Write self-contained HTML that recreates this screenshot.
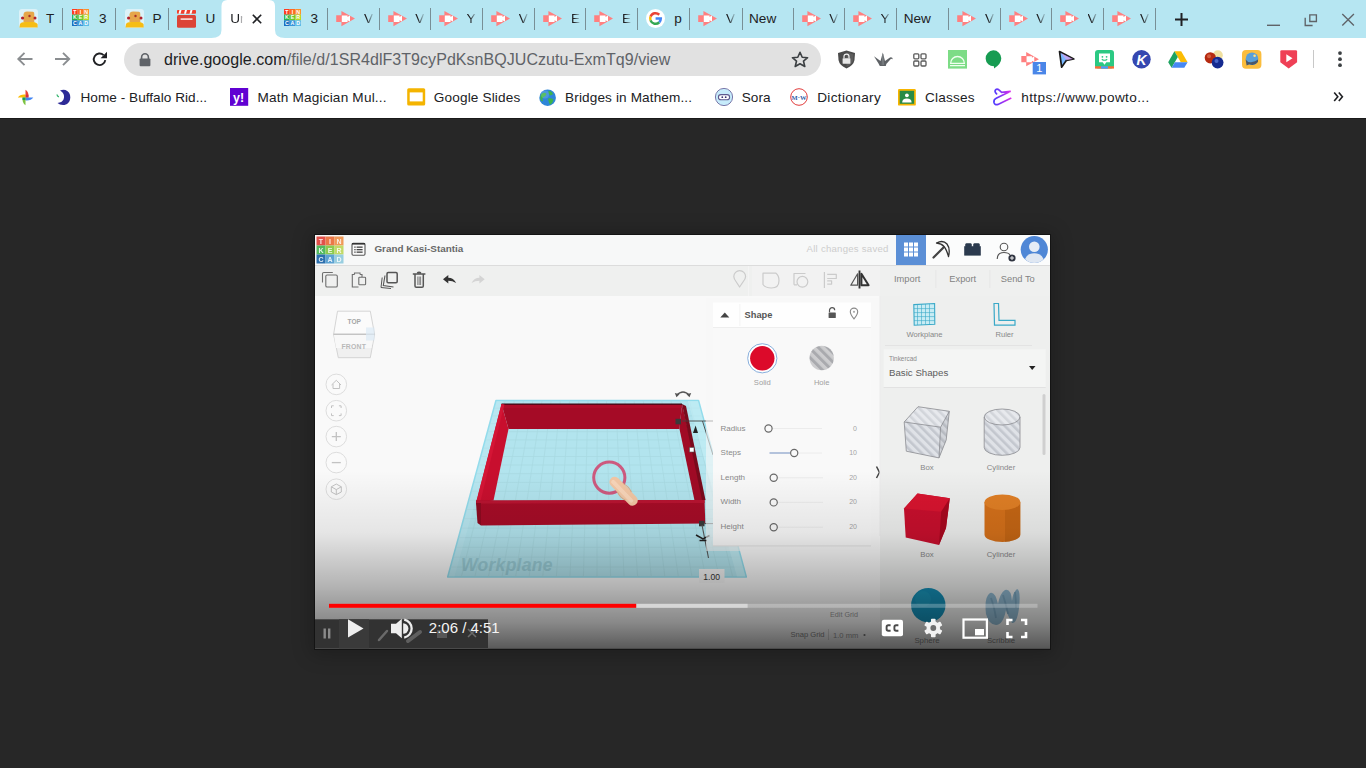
<!DOCTYPE html>
<html><head><meta charset="utf-8">
<style>
*{margin:0;padding:0;box-sizing:border-box}
html,body{width:1366px;height:768px;overflow:hidden;background:#272727;font-family:"Liberation Sans",sans-serif}
svg{position:absolute;overflow:visible}
#tabs{position:absolute;left:0;top:0;width:1366px;height:38px;background:#b6e6f2}
#toolbar{position:absolute;left:0;top:38px;width:1366px;height:42px;background:#fff}
#bookmarks{position:absolute;left:0;top:80px;width:1366px;height:38px;background:#fff;border-bottom:1px solid #1a1a1a;box-sizing:content-box}
.sep{position:absolute;top:8px;width:1px;height:22px;background:#788f96}
.tl{position:absolute;top:10.6px;font-size:13.6px;color:#202124;line-height:16px;white-space:nowrap}
.bm{position:absolute;top:89.6px;font-size:13.6px;color:#202124;line-height:16px;white-space:nowrap}
#omni{position:absolute;left:124px;top:43px;width:697px;height:33px;border-radius:17px;background:#e1e1e1}
#url{position:absolute;left:164px;top:50px;font-size:16px;letter-spacing:0.05px;line-height:19px;color:#5f6368;white-space:nowrap}
#url b{font-weight:400;color:#202124}
#video{position:absolute;left:315px;top:235px;width:735px;height:414px;overflow:hidden;background:#f8f8f8;box-shadow:0 0 0 1px #141414,0 2px 18px 4px rgba(0,0,0,.22)}
.fade{-webkit-mask-image:linear-gradient(90deg,#000 3px,rgba(0,0,0,.25) 8px,transparent 10px)}
</style></head><body>
<div id="tabs"></div>
<svg style="left:0;top:0" width="1366" height="38"><path d="M211.5 38 Q221.5 38 221.5 30 L221.5 6 Q221.5 0 227.5 0 L269 0 Q275 0 275 6 L275 30 Q275 38 285 38 Z" fill="#fff"/></svg>
<div class="sep" style="left:61.9px"></div>
<div class="sep" style="left:114.9px"></div>
<div class="sep" style="left:168.1px"></div>
<div class="sep" style="left:327.4px"></div>
<div class="sep" style="left:378.5px"></div>
<div class="sep" style="left:429.9px"></div>
<div class="sep" style="left:482.1px"></div>
<div class="sep" style="left:534.2px"></div>
<div class="sep" style="left:585.3px"></div>
<div class="sep" style="left:636.9px"></div>
<div class="sep" style="left:689.2px"></div>
<div class="sep" style="left:741.5px"></div>
<div class="sep" style="left:792.5px"></div>
<div class="sep" style="left:843.8px"></div>
<div class="sep" style="left:896.2px"></div>
<div class="sep" style="left:948.4px"></div>
<div class="sep" style="left:999.5px"></div>
<div class="sep" style="left:1050.8px"></div>
<div class="sep" style="left:1103.2px"></div>
<div class="sep" style="left:1155.4px"></div>
<svg width="0" height="0" style="left:0;top:0">
<defs>
<symbol id="i-bit" viewBox="0 0 19 19">
 <rect x="0" y="0" width="19" height="19" rx="3" fill="#dcf2f8"/>
 <path d="M4.5 5 Q5 2.6 8 2.6 L14 2.8 Q15.5 3 15.3 5 L15.3 13 L4.5 13 Z" fill="#e6a64a"/>
 <circle cx="3.6" cy="9" r="1.6" fill="#b2202a"/><circle cx="16" cy="9" r="1.5" fill="#b2202a"/>
 <circle cx="10.5" cy="7" r="1.2" fill="#a8302a"/>
 <path d="M0.5 18.5 L1 15 Q2 13 6 13 L14 13 Q18 13.5 18.6 15.5 L18.6 18.6 Z" fill="#f6bd14"/>
</symbol>
<symbol id="i-tc" viewBox="0 0 18 18">
 <rect x="0" y="0" width="6" height="6" fill="#ff3b1f"/><rect x="6" y="0" width="6" height="6" fill="#ff6a21"/><rect x="12" y="0" width="6" height="6" fill="#ff8f2a"/>
 <rect x="0" y="6" width="6" height="6" fill="#27b34a"/><rect x="6" y="6" width="6" height="6" fill="#6cc82c"/><rect x="12" y="6" width="6" height="6" fill="#b8d826"/>
 <rect x="0" y="12" width="6" height="6" fill="#1a6fc0"/><rect x="6" y="12" width="6" height="6" fill="#3a97dc"/><rect x="12" y="12" width="6" height="6" fill="#5cbde8"/>
 <g font-family="Liberation Sans" font-weight="700" font-size="5.6" fill="#fff" text-anchor="middle"><text x="3" y="5">T</text><text x="9" y="5">I</text><text x="15" y="5">N</text><text x="3" y="11">K</text><text x="9" y="11">E</text><text x="15" y="11">R</text><text x="3" y="17">C</text><text x="9" y="17">A</text><text x="15" y="17">D</text></g>
</symbol>
<symbol id="i-vid" viewBox="0 0 20 16">
 <path d="M0.2 4.3 L5.4 4.3 L5.4 0 L19 7.6 L5.4 15.3 L5.4 11 L0.2 11 Z" fill="#ff8080"/>
 <path d="M5.8 4.4 L11.5 4.4 L11.5 6 L14 4.6 L14 10.6 L11.5 9.3 L11.5 11 L5.8 11 Z" fill="#fff"/>
</symbol>
<symbol id="i-clap" viewBox="0 0 19 18">
 <rect x="0" y="0" width="19" height="3.7" rx="0.8" fill="#f0402e"/>
 <path d="M2.5 0 L4.5 0 L3.5 3.7 L1.5 3.7 Z M8 0 L10 0 L9 3.7 L7 3.7 Z M13.5 0 L15.5 0 L14.5 3.7 L12.5 3.7 Z" fill="#fff"/>
 <rect x="0" y="5" width="19" height="12.8" rx="1.5" fill="#dc4437"/>
 <rect x="3.6" y="8.3" width="11.9" height="1.6" fill="#fbe0dc"/>
</symbol>
<symbol id="i-g" viewBox="0 0 19 19">
 <circle cx="9.5" cy="9.5" r="9.5" fill="#fff"/>
 <g fill="none" stroke-width="2.5">
 <path d="M13.25 5.75 A5.3 5.3 0 0 0 4.52 7.69" stroke="#ea4335"/>
 <path d="M4.52 7.69 A5.3 5.3 0 0 0 4.52 11.31" stroke="#fbbc05"/>
 <path d="M4.52 11.31 A5.3 5.3 0 0 0 13.25 13.25" stroke="#34a853"/>
 <path d="M13.25 13.25 A5.3 5.3 0 0 0 14.8 9.5 H9.6" stroke="#4285f4"/>
 </g>
</symbol>
</defs></svg>
<svg style="left:18.5px;top:9px" width="19" height="19"><use href="#i-bit"/></svg>
<div class="tl" style="left:46px">T</div>
<svg style="left:72.2px;top:9px" width="17" height="17"><use href="#i-tc"/></svg>
<div class="tl" style="left:99.0px">3</div>
<svg style="left:124.9px;top:9px" width="19" height="19"><use href="#i-bit"/></svg>
<div class="tl" style="left:152.4px">P</div>
<svg style="left:177.0px;top:10px" width="19" height="18"><use href="#i-clap"/></svg>
<div class="tl" style="left:205.39999999999998px">U</div>
<div class="tl" style="left:230.3px;-webkit-mask-image:linear-gradient(90deg,#000 9px,transparent 13px)">Ur</div>
<svg style="left:251.8px;top:13.8px" width="10" height="10"><path d="M0.8 0.8 L9.2 9.2 M9.2 0.8 L0.8 9.2" stroke="#202124" stroke-width="1.6"/></svg>
<svg style="left:283.8px;top:9px" width="17" height="17"><use href="#i-tc"/></svg>
<div class="tl" style="left:310.6px">3</div>
<svg style="left:336.4px;top:10.6px" width="20" height="16"><use href="#i-vid"/></svg>
<div class="tl fade" style="left:364.09999999999997px">V</div>
<svg style="left:387.5px;top:10.6px" width="20" height="16"><use href="#i-vid"/></svg>
<div class="tl fade" style="left:415.2px">V</div>
<svg style="left:438.9px;top:10.6px" width="20" height="16"><use href="#i-vid"/></svg>
<div class="tl fade" style="left:466.59999999999997px">Y</div>
<svg style="left:491.1px;top:10.6px" width="20" height="16"><use href="#i-vid"/></svg>
<div class="tl fade" style="left:518.8000000000001px">V</div>
<svg style="left:543.2px;top:10.6px" width="20" height="16"><use href="#i-vid"/></svg>
<div class="tl fade" style="left:570.9000000000001px">E</div>
<svg style="left:594.3px;top:10.6px" width="20" height="16"><use href="#i-vid"/></svg>
<div class="tl fade" style="left:622.0px">E</div>
<svg style="left:646.0px;top:8.9px" width="19" height="19"><use href="#i-g"/></svg>
<div class="tl" style="left:674.1999999999999px">p</div>
<svg style="left:698.2px;top:10.6px" width="20" height="16"><use href="#i-vid"/></svg>
<div class="tl fade" style="left:725.9000000000001px">V</div>
<div class="tl" style="left:749px">New</div>
<svg style="left:801.5px;top:10.6px" width="20" height="16"><use href="#i-vid"/></svg>
<div class="tl fade" style="left:829.2px">V</div>
<svg style="left:852.8px;top:10.6px" width="20" height="16"><use href="#i-vid"/></svg>
<div class="tl fade" style="left:880.5px">Y</div>
<div class="tl" style="left:903.7px">New</div>
<svg style="left:957.4px;top:10.6px" width="20" height="16"><use href="#i-vid"/></svg>
<div class="tl fade" style="left:985.1px">V</div>
<svg style="left:1008.5px;top:10.6px" width="20" height="16"><use href="#i-vid"/></svg>
<div class="tl fade" style="left:1036.2px">V</div>
<svg style="left:1059.8px;top:10.6px" width="20" height="16"><use href="#i-vid"/></svg>
<div class="tl fade" style="left:1087.5px">V</div>
<svg style="left:1112.2px;top:10.6px" width="20" height="16"><use href="#i-vid"/></svg>
<div class="tl fade" style="left:1139.9px">V</div>
<svg style="left:1175px;top:12.5px" width="13" height="13"><path d="M6.5 0 V13 M0 6.5 H13" stroke="#202124" stroke-width="2"/></svg>
<svg style="left:1266px;top:24px" width="16" height="3"><rect x="1" y="0.6" width="13" height="1.4" fill="#5f6368"/></svg>
<svg style="left:1303px;top:12.5px" width="16" height="15"><path d="M6.8 1.9 H13.4 V8.5 H6.8 Z M2.2 4.8 V12.5 H9.6" fill="none" stroke="#5f6368" stroke-width="1.35"/></svg>
<svg style="left:1341px;top:13px" width="14" height="14"><path d="M1.3 1 L12.9 12.6 M12.9 1 L1.3 12.6" stroke="#5f6368" stroke-width="1.35"/></svg><div id="toolbar"></div>
<svg style="left:16px;top:51px" width="18" height="16"><path d="M16.5 8 H2.5 M8.5 1.8 L2.3 8 L8.5 14.2" fill="none" stroke="#8a8d90" stroke-width="1.9"/></svg>
<svg style="left:53.5px;top:51px" width="18" height="16"><path d="M1 8 H15 M9 1.8 L15.2 8 L9 14.2" fill="none" stroke="#8a8d90" stroke-width="1.9"/></svg>
<svg style="left:91px;top:51px" width="17" height="17"><path d="M14.3 9.2 A5.8 5.8 0 1 1 12.6 4.1" fill="none" stroke="#202124" stroke-width="1.9"/><path d="M16 0.8 L16 7.3 L9.6 7.3 Z" fill="#202124"/></svg>
<div id="omni"></div>
<svg style="left:138.5px;top:52.5px" width="12" height="14"><path d="M2.6 6 V4.2 A3.4 3.4 0 0 1 9.4 4.2 V6" fill="none" stroke="#5f6368" stroke-width="1.6"/><rect x="0.6" y="5.6" width="10.8" height="7.6" rx="1" fill="#5f6368"/></svg>
<div id="url"><b>drive.google.com</b>/file/d/1SR4dlF3T9cyPdKsnBQJUCzutu-ExmTq9/view</div>
<svg style="left:791px;top:51px" width="18" height="17"><path d="M9 1.3 L11.2 6.3 L16.6 6.7 L12.5 10.2 L13.8 15.5 L9 12.7 L4.2 15.5 L5.5 10.2 L1.4 6.7 L6.8 6.3 Z" fill="none" stroke="#3c4043" stroke-width="1.6" stroke-linejoin="round"/></svg>
<!-- extensions -->
<svg style="left:837px;top:50px" width="19" height="19"><path d="M9.5 0.5 L18 3 L17.5 10 Q16.5 15.5 9.5 18.5 Q2.5 15.5 1.5 10 L1 3 Z" fill="#4a4a4a"/><path d="M9.5 2.2 L16.5 4.3 L16.2 9.8 Q15.3 14.3 9.5 16.8 Z" fill="#6a6a6a" opacity="0.6"/><path d="M7 8.3 V6.6 A2.5 2.5 0 0 1 12 6.6 V8.3" fill="none" stroke="#eee" stroke-width="1.2"/><rect x="5.6" y="8.2" width="7.8" height="5.6" rx="0.6" fill="#e8e8e8"/></svg>
<svg style="left:872px;top:50px" width="22" height="18"><path d="M2 6.2 L8.5 11 L10.8 2.5 L13 11 L18 7.5 Q20.5 6.8 20.8 9.3 L19 8.8 L14.3 14 L13.8 16 H7.8 L6.5 13.5 Z" fill="#5e6266"/><path d="M10.8 4 L10.2 15 M10.8 4 L11.6 15" stroke="#8a8e92" stroke-width="0.6"/></svg>
<svg style="left:913px;top:53px" width="14" height="14"><g fill="none" stroke="#5a5a5a" stroke-width="1.3"><rect x="0.8" y="0.8" width="5" height="5" rx="1"/><rect x="8" y="0.8" width="5" height="5" rx="1"/><rect x="0.8" y="8" width="5" height="5" rx="1"/><rect x="8" y="8" width="5" height="5" rx="1"/></g></svg>
<svg style="left:948px;top:50px" width="19" height="19"><rect x="0" y="0" width="19" height="18.6" fill="#7ddc86"/><path d="M2.6 13.4 A6.9 6.9 0 0 1 16.4 13.4 Z M2 15.6 H17" fill="none" stroke="#f0fff0" stroke-width="1.3"/></svg>
<svg style="left:985px;top:50px" width="17" height="19"><path d="M8.3 0.3 A8 8 0 0 1 16.3 8.3 Q16.3 14 9 18.6 L9 16.3 A8 8 0 0 1 8.3 0.3 Z" fill="#179c52"/></svg>
<svg style="left:1021px;top:52px" width="26" height="23"><use href="#i-vid" x="0" y="0" width="19" height="15"/><rect x="11.7" y="10" width="13.3" height="12.4" fill="#4a86e8"/><text x="18.3" y="20.4" font-family="Liberation Sans" font-size="11" fill="#fff" text-anchor="middle">1</text></svg>
<svg style="left:1058px;top:50px" width="17" height="19"><path d="M1.5 1.5 L15.8 9 L8.5 10.3 L3.6 17.2 Z" fill="#7ab8ff" stroke="#1a1a1a" stroke-width="1.7" stroke-linejoin="round"/><path d="M3 3 L8.5 10.3 L15 9" fill="#d8a0f0" opacity="0.7"/></svg>
<svg style="left:1095px;top:50px" width="19" height="19"><rect x="0" y="0" width="19" height="18.6" rx="3" fill="#2bc983"/><rect x="0" y="16.3" width="19" height="2.3" fill="#ff6b35"/><rect x="6" y="16.3" width="7" height="2.3" fill="#3fa0ff"/><path d="M4 3.4 H15 V12.3 H11.3 L9.5 14.8 L7.7 12.3 H4 Z" fill="#fff"/><circle cx="7.4" cy="6.8" r="0.9" fill="#2bc983"/><circle cx="11.6" cy="6.8" r="0.9" fill="#2bc983"/><path d="M6.8 9.2 Q9.5 11.3 12.2 9.2" fill="none" stroke="#2bc983" stroke-width="1.1"/></svg>
<svg style="left:1132px;top:50px" width="19" height="19"><circle cx="9.5" cy="9.3" r="9.2" fill="#3547b0"/><text x="9.6" y="14.8" font-family="Liberation Sans" font-weight="700" font-style="italic" font-size="14" fill="#fff" text-anchor="middle">K</text></svg>
<svg style="left:1167.5px;top:51px" width="20" height="17"><path d="M6.4 0.3 H13.2 L19.6 11.2 H12.8 Z" fill="#fbbc04"/><path d="M6.4 0.3 L0.2 11.2 L3.6 16.8 L9.8 5.9 Z" fill="#1ea362"/><path d="M3.6 16.8 H16.3 L19.6 11.2 H6.9 Z" fill="#4688f4"/></svg>
<svg style="left:1204px;top:50px" width="21" height="19"><circle cx="13.8" cy="5.3" r="5" fill="#f0e0a0"/><circle cx="6.3" cy="7.8" r="5.6" fill="#b52a10"/><circle cx="5" cy="6.2" r="2" fill="#e88060" opacity="0.6"/><circle cx="13.6" cy="12.6" r="5.9" fill="#152a90"/><circle cx="12.5" cy="11" r="2" fill="#6080e0" opacity="0.7"/></svg>
<svg style="left:1242px;top:50px" width="20" height="19"><rect x="0" y="0" width="19.4" height="18.8" rx="4" fill="#fbbd3e"/><circle cx="10" cy="8.8" r="6.3" fill="#5a9fd8"/><path d="M3.6 9.5 Q6 13 10 12 Q13 11.5 16 9.5 L16 12 Q12 16.5 7.5 14.2 L4.6 15.6 Z" fill="#49576a"/><circle cx="12.6" cy="5.7" r="1.3" fill="#ffe080"/></svg>
<svg style="left:1280px;top:50px" width="18" height="19"><path d="M0.3 1.5 Q0.3 0.2 1.6 0.2 H15.8 Q17.1 0.2 17.1 1.5 V12.3 L8.7 18.6 L0.3 12.3 Z" fill="#ef4056"/><path d="M6.3 4.3 L12.5 8.3 L6.3 12.3 Z" fill="#fff"/></svg>
<div style="position:absolute;left:1313px;top:50px;width:1px;height:18px;background:#c8c8c8"></div>
<svg style="left:1337px;top:51px" width="6" height="17"><circle cx="3" cy="2.1" r="1.9" fill="#3c4043"/><circle cx="3" cy="8.2" r="1.9" fill="#3c4043"/><circle cx="3" cy="14.2" r="1.9" fill="#3c4043"/></svg>
<div id="bookmarks"></div>
<svg style="left:17px;top:89px" width="17" height="17"><path d="M8.5 8.5 V0.8 Q12 3 11.5 8.5 Z" fill="#e94235"/><path d="M8.5 8.5 H16.3 Q14 12 8.5 11.5 Z" fill="#4285f4"/><path d="M8.5 8.5 V16.3 Q5 14 5.5 8.5 Z" fill="#7cc242"/><path d="M8.5 8.5 H0.8 Q3 5 8.5 5.5 Z" fill="#fbbc04"/><path d="M8.5 8.5 L5.5 8.5 L5.6 11 L8.5 11 Z" fill="#1a9960"/><path d="M8.5 8.5 L11.5 8.5 L11.5 5.8 L8.5 5.8Z" fill="#c0244f" opacity="0.7"/></svg>
<svg style="left:55.5px;top:89px" width="15" height="17"><path d="M4 1.5 Q7 0.2 9.5 1 Q14.3 2.8 14.3 8.5 Q14.3 14.5 8.5 16 Q4 16.5 1.5 14 Q6 13.5 7.5 10.5 Q9 6.5 6.5 3.5 Q5.5 2.5 4 1.5 Z" fill="#2d2a96"/><path d="M1 5.5 Q1.2 7.5 3 7.8" fill="none" stroke="#3cb873" stroke-width="1.4"/></svg>
<div class="bm" style="left:80.5px;letter-spacing:0.03px">Home - Buffalo Rid...</div>
<svg style="left:229.8px;top:87.8px" width="19" height="18"><rect x="0" y="0" width="18.2" height="17.8" fill="#6001d2"/><text x="8.6" y="14" font-family="Liberation Sans" font-weight="700" font-size="12.5" fill="#fff" text-anchor="middle">y!</text></svg>
<div class="bm" style="left:257.4px;letter-spacing:0.2px">Math Magician Mul...</div>
<svg style="left:406.6px;top:88px" width="19" height="18"><rect x="0.2" y="0.2" width="18" height="17.4" rx="1.5" fill="#f4b400"/><rect x="2.7" y="4.4" width="13" height="9" fill="#fff"/></svg>
<div class="bm" style="left:433.8px;letter-spacing:0.15px">Google Slides</div>
<svg style="left:538.5px;top:88.5px" width="18" height="18"><circle cx="8.6" cy="8.7" r="8.3" fill="#2e86d8"/><path d="M3 4.5 Q6 3 7.5 5 Q6.5 8 4 8.5 Q2.5 10 4 12 Q3 13 1.6 11 Q0.6 7 3 4.5 Z M9.5 1.5 Q13 2 14 5 Q12 7 10.5 6 Q9 4 9.5 1.5 Z M9 9.5 Q12 8.5 14.5 10.5 Q14 14 11 15.8 Q9.5 13 9 9.5 Z" fill="#3db44a"/><circle cx="6" cy="5.5" r="4" fill="#fff" opacity="0.15"/></svg>
<div class="bm" style="left:565.1px;letter-spacing:0.12px">Bridges in Mathem...</div>
<svg style="left:715px;top:88px" width="18" height="18"><circle cx="9" cy="9" r="8.6" fill="#c7ecfb" stroke="#6c6aa0" stroke-width="0.9"/><rect x="3.4" y="6.6" width="11.2" height="5.2" rx="2.6" fill="#fff" stroke="#5e5a8e" stroke-width="1.1"/><circle cx="7.3" cy="9.2" r="0.9" fill="#3a3570"/><circle cx="10.7" cy="9.2" r="0.9" fill="#3a3570"/></svg>
<div class="bm" style="left:741.8px">Sora</div>
<svg style="left:790px;top:88px" width="18" height="18"><circle cx="9" cy="9" r="8.3" fill="#fff" stroke="#e23c3c" stroke-width="1"/><text x="9" y="11.5" font-family="Liberation Serif" font-weight="700" font-size="6.5" fill="#3060a8" text-anchor="middle">M·W</text></svg>
<div class="bm" style="left:817.2px;letter-spacing:0.35px">Dictionary</div>
<svg style="left:898px;top:89px" width="18" height="17"><rect x="0" y="0" width="17.8" height="16.6" rx="1.2" fill="#f7b500"/><rect x="1.7" y="1.8" width="14.4" height="13" fill="#2a8b46"/><circle cx="8.9" cy="6.3" r="1.9" fill="#fff"/><path d="M4.2 13.5 Q4.2 9.6 8.9 9.6 Q13.6 9.6 13.6 13.5 Z" fill="#fff"/></svg>
<div class="bm" style="left:925.0px;letter-spacing:0.2px">Classes</div>
<svg style="left:993.3px;top:88px" width="20" height="19"><defs><linearGradient id="pwg" x1="0" x2="1"><stop offset="0" stop-color="#4b3bff"/><stop offset="1" stop-color="#d92ce8"/></linearGradient></defs><path d="M3.6 5.8 Q0.8 3 3 1.5 Q4.3 0.6 6.5 2.4 L8.6 4.4 L17.6 3.3 L3.2 10.2 Q0.5 11.5 1 14.5 Q1.8 17.5 5 16.4 L17.7 10.3" fill="none" stroke="url(#pwg)" stroke-width="1.7" stroke-linecap="round"/></svg>
<div class="bm" style="left:1021.2px;letter-spacing:0.38px">https://www.powto...</div>
<svg style="left:1333px;top:91px" width="11" height="12"><path d="M1.2 1.5 L4.8 5.8 L1.2 10.1 M5.8 1.5 L9.4 5.8 L5.8 10.1" fill="none" stroke="#202124" stroke-width="1.6"/></svg>
<div id="video"></div>
<svg style="left:315px;top:235px;overflow:hidden" width="735" height="414" viewBox="315 235 735 414">
<defs>
 <pattern id="hatch" width="6.5" height="6.5" patternUnits="userSpaceOnUse" patternTransform="rotate(-45)"><rect width="6.5" height="6.5" fill="#cdcdcf"/><rect width="3" height="6.5" fill="#a9aaae"/></pattern>
 <pattern id="hatchL" width="6" height="6" patternUnits="userSpaceOnUse" patternTransform="rotate(-45)"><rect width="6" height="6" fill="#dfe2e7"/><rect width="2.6" height="6" fill="#c3c7ce"/></pattern>
 <linearGradient id="ovl" x1="0" y1="0" x2="0" y2="1">
  <stop offset="0" stop-color="#000" stop-opacity="0"/>
  <stop offset="0.35" stop-color="#000" stop-opacity="0.08"/>
  <stop offset="0.65" stop-color="#000" stop-opacity="0.28"/>
  <stop offset="0.85" stop-color="#000" stop-opacity="0.45"/>
  <stop offset="1" stop-color="#000" stop-opacity="0.64"/>
 </linearGradient>
</defs>
<!-- base -->
<rect x="315" y="235" width="735" height="414" fill="#f9f9f9"/>
<!-- header -->
<rect x="315" y="235" width="735" height="30" fill="#f7f8f8"/>
<rect x="315" y="265" width="735" height="1" fill="#dcdcdc"/>
<!-- toolbar -->
<rect x="315" y="266" width="735" height="30" fill="#eff0ef"/>
<rect x="752" y="266" width="128" height="30" fill="#f2f2f2"/>
<!-- logo -->
<g>
 <rect x="316.5" y="236.5" width="9" height="9" fill="#e2504a"/><rect x="325.5" y="236.5" width="9" height="9" fill="#ec7848"/><rect x="334.5" y="236.5" width="9" height="9" fill="#f09a58"/>
 <rect x="316.5" y="245.5" width="9" height="9" fill="#52ba5e"/><rect x="325.5" y="245.5" width="9" height="9" fill="#8ccb50"/><rect x="334.5" y="245.5" width="9" height="9" fill="#c2da68"/>
 <rect x="316.5" y="254.5" width="9" height="9" fill="#2c70ae"/><rect x="325.5" y="254.5" width="9" height="9" fill="#5ca2d2"/><rect x="334.5" y="254.5" width="9" height="9" fill="#98cee0"/>
 <g font-family="Liberation Sans" font-weight="700" font-size="7" fill="#fff" text-anchor="middle" opacity="0.85">
  <text x="321" y="243.7">T</text><text x="330" y="243.7">I</text><text x="339" y="243.7">N</text>
  <text x="321" y="252.7">K</text><text x="330" y="252.7">E</text><text x="339" y="252.7">R</text>
  <text x="321" y="261.7">C</text><text x="330" y="261.7">A</text><text x="339" y="261.7">D</text>
 </g>
</g>
<!-- list icon -->
<rect x="352" y="243.3" width="13" height="12" rx="1.2" fill="#fafafa" stroke="#555" stroke-width="1.1"/>
<rect x="352" y="243" width="13" height="1.6" fill="#333"/>
<g fill="#444"><rect x="354.3" y="246.5" width="1.3" height="1.3"/><rect x="356.6" y="246.5" width="6" height="1.3"/><rect x="354.3" y="249" width="1.3" height="1.3"/><rect x="356.6" y="249" width="6" height="1.3"/><rect x="354.3" y="251.5" width="1.3" height="1.3"/><rect x="356.6" y="251.5" width="6" height="1.3"/></g>
<text x="374.4" y="251.8" font-family="Liberation Sans" font-weight="700" font-size="9.9" fill="#686868">Grand Kasi-Stantia</text>
<!-- header right -->
<text x="888.7" y="252.2" font-family="Liberation Sans" font-size="9.6" letter-spacing="0.25" fill="#cdcdcd" text-anchor="end">All changes saved</text>
<rect x="896" y="235" width="30" height="30" fill="#5b8fd6"/>
<g fill="#fff"><rect x="904" y="242.5" width="4" height="4"/><rect x="909" y="242.5" width="4" height="4"/><rect x="914" y="242.5" width="4" height="4"/><rect x="904" y="247.5" width="4" height="4"/><rect x="909" y="247.5" width="4" height="4"/><rect x="914" y="247.5" width="4" height="4"/><rect x="904" y="252.5" width="4" height="4"/><rect x="909" y="252.5" width="4" height="4"/><rect x="914" y="252.5" width="4" height="4"/></g>
<rect x="926" y="235" width="124" height="30" fill="#fbfcfc"/>
<path d="M933.5 257.5 L945 246" stroke="#444" stroke-width="2.2" stroke-linecap="round"/>
<path d="M936.5 243 Q943 239.5 947 244 Q950.5 248.5 948.5 256.5 Q946.5 249.5 944 246.5 Q941.5 243.5 936.5 243 Z" fill="#fafafa" stroke="#333" stroke-width="1.3" stroke-linejoin="round"/>
<path d="M964.5 246.5 H980.5 V255.3 H964.5 Z M965.5 246.5 V244.5 Q965.5 243.6 966.5 243.6 H970.5 Q971.5 243.6 971.5 244.5 V246.5 M973.5 246.5 V244.5 Q973.5 243.6 974.5 243.6 H978.5 Q979.5 243.6 979.5 244.5 V246.5" fill="#2b3a4e" stroke="#2b3a4e" stroke-width="0.6"/>
<circle cx="1004" cy="247" r="3.8" fill="none" stroke="#555" stroke-width="1.1"/>
<path d="M997.2 259 Q997.2 252.5 1004 252.5 Q1008.5 252.5 1010 255" fill="none" stroke="#555" stroke-width="1.1"/>
<circle cx="1012" cy="258" r="3.6" fill="#2f3440"/><path d="M1010 258 H1014 M1012 256 V260" stroke="#fff" stroke-width="0.9"/>
<circle cx="1034.3" cy="249.5" r="13.6" fill="#4f87d6"/>
<circle cx="1034.3" cy="246.8" r="5.3" fill="#e6edf6"/>
<path d="M1025 259 Q1027 253.3 1034.3 253.3 Q1041.5 253.3 1043.6 259 Q1040 263 1034.3 263 Q1028.5 263 1025 259 Z" fill="#dfe7f2"/>
<!-- toolbar left icons -->
<g fill="none" stroke="#6e6e6e" stroke-width="1.1">
 <path d="M322.5 282.5 V273.8 Q322.5 272.5 323.8 272.5 H332.8"/>
 <rect x="325.8" y="275" width="11.5" height="12" rx="1.3"/>
 <path d="M354.5 274.5 H352.3 V287 H358.5"/><path d="M354.5 274.5 V273 H360 V274.5 M360 274.5 H362 V277"/>
 <rect x="358.8" y="277.3" width="6.8" height="7.5" rx="0.8"/>
</g>
<g fill="none" stroke="#555" stroke-width="1.5">
 <rect x="387" y="272.6" width="10.2" height="10.2" rx="1.2"/>
 <path d="M385 275.5 L383.3 285.5 L393.5 287" stroke-width="1.1"/><path d="M382.2 277.5 L381 287.5 L391 288.5" stroke-width="1"/>
 <path d="M412.8 274 H425.4 M415 274.6 V286 Q415 287.3 416.3 287.3 H422 Q423.3 287.3 423.3 286 V274.6 M417.2 272.8 Q419 271.5 421 272.8"/>
</g>
<g stroke="#777" stroke-width="0.9"><path d="M417.8 276.5 V285 M419.2 276.5 V285 M420.6 276.5 V285"/></g>
<path d="M443 279.2 L448.3 275 L448.3 277.8 Q453.5 277.8 456.2 283 Q452.5 280.8 448.3 280.8 L448.3 283.5 Z" fill="#333"/>
<path d="M484.7 279.2 L479.4 275 L479.4 277.8 Q474.2 277.8 471.5 283 Q475.2 280.8 479.4 280.8 L479.4 283.5 Z" fill="#d4d4d4"/>
<!-- toolbar right icons -->
<rect x="748" y="266" width="0.8" height="30" fill="#f6f6f6"/>
<g fill="none" stroke="#cbcbcb" stroke-width="1.2" stroke-linejoin="round">
 <path d="M739.6 287 L736 281.5 Q733.8 278.5 733.8 276.5 A5.9 5.9 0 0 1 745.6 276.5 Q745.6 278.5 743.3 281.5 Z"/>
 <path d="M763 273.2 H776 Q779 275.5 779 280.5 Q779 288 771.5 288 Q765.5 288 763 284.5 Z"/>
 <path d="M794 284.8 V273.5 H805.5 M794 284.8 H797"/><circle cx="802.4" cy="281.8" r="5.4"/>
 <path d="M824.4 272 V288 M827.2 274.4 H836.3 V278.5 H827.2 M827.2 280.9 H831.6 V284.1 H827.2"/>
</g>
<path d="M859.5 270.5 V288.5" stroke="#333" stroke-width="1.9"/>
<path d="M850.8 285.2 L857.6 273.8 V285.2 Z" fill="none" stroke="#555" stroke-width="1.2" stroke-linejoin="round"/>
<path d="M861.4 273.8 L868.6 285.2 H861.4 Z" fill="none" stroke="#333" stroke-width="2" stroke-linejoin="round"/>
<g font-family="Liberation Sans" font-size="9.3" fill="#828282">
 <text x="894" y="282">Import</text><text x="949.3" y="282">Export</text><text x="1000.8" y="282">Send To</text>
</g>
<rect x="935.5" y="270" width="0.8" height="18" fill="#e4e4e4"/><rect x="989.5" y="270" width="0.8" height="18" fill="#e4e4e4"/>
<!-- view cube -->
<path d="M337.5 311.2 H370.3 L374.6 334.3 H333.6 Z" fill="#fbfbfb" stroke="#d0d0d0" stroke-width="0.9" stroke-linejoin="round"/>
<path d="M333.6 334.3 H374.6 L370.3 357.7 H338.3 Z" fill="#f0f0f0" stroke="#d0d0d0" stroke-width="0.9" stroke-linejoin="round"/>
<path d="M334 335 H374 L371.5 348 H336 Z" fill="#f8f8f8"/>
<path d="M333.6 334.3 H374.6" stroke="#c4c4c4" stroke-width="1.2"/>
<rect x="366" y="327.5" width="8.5" height="13" fill="#dce9f5" opacity="0.7"/>
<text x="354.3" y="324" font-family="Liberation Sans" font-weight="700" font-size="6.6" fill="#a6a6a6" text-anchor="middle">TOP</text>
<text x="353.8" y="349.3" font-family="Liberation Sans" font-weight="700" font-size="6.9" letter-spacing="0.2" fill="#b8b8b8" text-anchor="middle">FRONT</text>
<!-- nav buttons -->
<g fill="#fafafa" stroke="#d9d9d9" stroke-width="0.9">
 <circle cx="336.3" cy="384.4" r="10.3"/><circle cx="336.3" cy="410.7" r="10.3"/><circle cx="336.3" cy="436.6" r="10.3"/><circle cx="336.3" cy="462.6" r="10.3"/><circle cx="336.3" cy="489.2" r="10.3"/>
</g>
<g fill="none" stroke="#c2c2c2" stroke-width="1">
 <path d="M331.5 385 L336.3 380.3 L341 385 M333 384 V388.5 H339.6 V384"/>
 <path d="M331.5 408 V405.8 H333.7 M338.9 405.8 H341.1 V408 M341.1 413.4 V415.6 H338.9 M333.7 415.6 H331.5 V413.4"/>
 <path d="M331.8 436.6 H340.8 M336.3 432.1 V441.1" stroke-width="1.3"/>
 <path d="M331.8 462.6 H340.8" stroke-width="1.3"/>
 <path d="M336.3 484 L341.3 486.8 V492 L336.3 494.6 L331.3 492 V486.8 Z M331.3 486.8 L336.3 489.6 L341.3 486.8 M336.3 489.6 V494.6"/>
</g>
<path d="M496 400.5 L698.5 400.5 L746.3 577 L447.7 577 Z" fill="#b2e4ee" stroke="#92dcec" stroke-width="1.6" stroke-linejoin="round"/>
<path d="M505.2 400.5 L461.3 577 M514.4 400.5 L474.8 577 M523.6 400.5 L488.4 577 M532.8 400.5 L502.0 577 M542.0 400.5 L515.6 577 M551.2 400.5 L529.1 577 M560.4 400.5 L542.7 577 M569.6 400.5 L556.3 577 M578.8 400.5 L569.9 577 M588.0 400.5 L583.4 577 M597.2 400.5 L597.0 577 M606.5 400.5 L610.6 577 M615.7 400.5 L624.1 577 M624.9 400.5 L637.7 577 M634.1 400.5 L651.3 577 M643.3 400.5 L664.9 577 M652.5 400.5 L678.4 577 M661.7 400.5 L692.0 577 M670.9 400.5 L705.6 577 M680.1 400.5 L719.2 577 M689.3 400.5 L732.7 577 M493.9 408.1 L700.6 408.1 M491.8 415.9 L702.7 415.9 M489.6 423.7 L704.8 423.7 M487.4 431.7 L707.0 431.7 M485.2 439.9 L709.2 439.9 M483.0 448.1 L711.4 448.1 M480.7 456.5 L713.7 456.5 M478.3 465.0 L716.0 465.0 M476.0 473.7 L718.3 473.7 M473.6 482.4 L720.7 482.4 M471.2 491.3 L723.1 491.3 M468.7 500.3 L725.5 500.3 M466.2 509.5 L728.0 509.5 M463.6 518.7 L730.5 518.7 M461.1 528.1 L733.1 528.1 M458.5 537.6 L735.6 537.6 M455.8 547.3 L738.3 547.3 M453.2 557.1 L740.9 557.1 M450.4 567.0 L743.6 567.0" stroke="#a8d9e2" stroke-width="0.75" fill="none"/>
<text x="461" y="570.5" font-family="Liberation Sans" font-weight="700" font-style="italic" font-size="17.5" fill="#98ccd6" letter-spacing="0.3">Workplane</text><path d="M688 401 L698 401 L745.5 576.5 L737 576.5 Z" fill="#c6f0f8" opacity="0.55"/>
<path d="M496.5 401 L503 401 L454.5 576.5 L448.5 576.5 Z" fill="#c6f0f8" opacity="0.3"/>
<!-- red frame -->
<path d="M501.5 404 L682 404 L679.5 429 L508.5 429 Z" fill="#a50b26"/>
<path d="M501.5 404 L682 404 L681.5 408 L502.2 408 Z" fill="#ad0d29"/>
<path d="M501.5 404.2 H682" stroke="#3a0a14" stroke-width="1.2"/>
<path d="M501.5 404 L508.5 429 L493.5 500.5 L476 503 Z" fill="#c80f2e"/>
<path d="M501.5 404 L504.5 404.5 L480 503 L476 503 Z" fill="#d41535"/>
<path d="M682 404 L704.5 500 L694.5 500.5 L679.5 429 Z" fill="#a00a25"/>
<path d="M682 404 L686 406 L705.5 500 L702 500 Z" fill="#7a0a1c"/>
<path d="M476 500.5 L704.5 500 L705.3 523.6 L481 525.5 Z" fill="#a60c27"/>
<path d="M476 500.5 L704.5 500 L704.6 503 L476.8 503.5 Z" fill="#b81431"/>
<path d="M476 503 L481 503 L481 525.5 L477.5 523 Z" fill="#8d0a20"/>
<!-- handles/dimension -->
<path d="M676.5 395.5 Q683 388.5 689.5 395.5" fill="none" stroke="#555" stroke-width="1.3"/>
<path d="M674.8 393 L676.5 397.3 L679.5 394.2 Z M691.2 393 L689.5 397.3 L686.5 394.2 Z" fill="#555"/>
<rect x="675.5" y="418.8" width="5.5" height="5.5" fill="#3a3a3a"/>
<rect x="699" y="520.8" width="5.5" height="5.5" fill="#3a3a3a"/>
<rect x="689.5" y="447.5" width="4.5" height="4.5" fill="#fff" stroke="#555" stroke-width="0.6"/>
<path d="M682 421 H713.5" stroke="#444" stroke-width="0.9"/>
<path d="M702.5 421 L713 455" stroke="#444" stroke-width="0.9"/>
<path d="M695.6 425.5 L698 433 L693 433 Z" fill="#222"/>
<path d="M704.5 523.6 H713.5" stroke="#444" stroke-width="0.9"/>
<path d="M702 525 L708.5 558" stroke="#555" stroke-width="1.1"/>
<path d="M696 535 L703 539 L709.5 535.5 M699.5 540.5 H707" stroke="#222" stroke-width="1.5" fill="none"/>
<rect x="699" y="569" width="25.5" height="14" fill="#f4f4f4"/>
<text x="711.7" y="579.8" font-family="Liberation Sans" font-size="8.6" fill="#333" text-anchor="middle">1.00</text>
<!-- cursor -->
<circle cx="609.3" cy="477.6" r="15.6" fill="none" stroke="#cf4a72" stroke-width="3" opacity="0.9"/>
<g transform="translate(623.6 491.2) rotate(-44)">
 <rect x="-5.2" y="-18" width="10.4" height="36" rx="5" fill="#f2c6a4"/>
 <path d="M-5 -4 Q-7 2 -5 8 M5 -6 Q7 0 5 6" stroke="#e0aa84" stroke-width="1" fill="none"/>
 <rect x="-3" y="-16" width="4" height="30" rx="2" fill="#fbe0c8" opacity="0.6"/>
</g>
<!-- inspector panel -->
<rect x="706" y="298" width="173" height="253" fill="#f6f6f6" opacity="0.6"/>
<rect x="713" y="302.5" width="158" height="243.5" fill="#f9f9f9"/>
<rect x="713" y="302.5" width="158" height="24.5" fill="#fefefe"/>
<rect x="713" y="327" width="158" height="0.8" fill="#ececec"/>
<rect x="739.5" y="304" width="0.8" height="22" fill="#f0f0f0"/>
<path d="M720.3 317.5 L724.8 312.6 L729.3 317.5 Z" fill="#444"/>
<text x="744.5" y="317.8" font-family="Liberation Sans" font-weight="700" font-size="9.3" fill="#555">Shape</text>
<path d="M829.5 312.3 V310.3 A2.6 2.6 0 0 1 834.7 310.3" fill="none" stroke="#555" stroke-width="1.2"/>
<rect x="828.6" y="312.5" width="7.2" height="5.6" rx="0.6" fill="#555"/>
<path d="M854 318.8 Q850.3 314.5 850.3 311.8 A3.7 3.7 0 0 1 857.7 311.8 Q857.7 314.5 854 318.8 Z" fill="none" stroke="#888" stroke-width="1.1"/>
<circle cx="854" cy="311.8" r="1.1" fill="#aaa"/>
<circle cx="762.3" cy="358.3" r="14.6" fill="#fff" stroke="#7aa6d8" stroke-width="0.9"/>
<circle cx="762.3" cy="358.3" r="12.2" fill="#dc0a2a"/>
<circle cx="821.7" cy="358" r="12.2" fill="url(#hatch)"/>
<g font-family="Liberation Sans" font-size="7.6" fill="#a0a0a0" text-anchor="middle"><text x="762.3" y="385">Solid</text><text x="821.7" y="385">Hole</text></g>
<g font-family="Liberation Sans" font-size="8" fill="#8a8a8a">
 <text x="720.6" y="430.5">Radius</text><text x="720.6" y="455.2">Steps</text><text x="720.6" y="480">Length</text><text x="720.6" y="504.4">Width</text><text x="720.6" y="529.2">Height</text>
</g>
<g stroke="#ececec" stroke-width="1"><path d="M772 428.5 H822 M798 453 H822 M778 477.8 H823 M778 502.4 H823 M778 527.2 H823"/></g>
<path d="M769.5 453 H790" stroke="#8ea6cc" stroke-width="1.3"/>
<g fill="#fafafa" stroke="#6a6a6a" stroke-width="1.2">
 <circle cx="768.5" cy="428.5" r="3.6"/><circle cx="794.2" cy="453" r="3.6"/><circle cx="773.7" cy="477.8" r="3.6"/><circle cx="773.7" cy="502.4" r="3.6"/><circle cx="773.7" cy="527.2" r="3.6"/>
</g>
<g font-family="Liberation Sans" font-size="7" fill="#a5a5a5" text-anchor="end">
 <text x="857" y="430.5">0</text><text x="857" y="455.2">10</text><text x="857" y="480">20</text><text x="857" y="504.4">20</text><text x="857" y="529.2">20</text>
</g>
<rect x="713" y="545.5" width="158" height="0.9" fill="#e0e0e0"/>
<path d="M876.5 466.5 L879.5 472.3 L876.5 478" fill="none" stroke="#444" stroke-width="1.5"/>
<!-- sidebar -->
<rect x="880" y="296" width="170" height="353" fill="#eeefee"/>
<rect x="879.5" y="296" width="1" height="240" fill="#ebebeb"/>
<g fill="none" stroke="#3aa9c8" stroke-width="1.1">
 <path d="M913.8 304.6 L934.6 303.5 L934.8 324.2 L914.2 325.2 Z" fill="#c8ecf4"/>
 <path d="M917.5 304.4 V325 M921.5 304.2 V324.8 M925.5 304 V324.6 M929.5 303.8 V324.4 M913.9 308.6 H934.6 M914 312.6 H934.7 M914 316.6 H934.7 M914.1 320.6 H934.8" stroke-width="0.6"/>
 <path d="M994 303.5 L998.5 303.5 L999 320.3 L1015 320.3 L1015 325.2 L994.5 325.2 Z" stroke-width="1.2"/>
</g>
<g font-family="Liberation Sans" font-size="7.6" fill="#888" text-anchor="middle"><text x="924.5" y="336.8">Workplane</text><text x="1004.5" y="336.8">Ruler</text></g>
<rect x="885" y="345.2" width="147" height="0.8" fill="#e0e0e0"/>
<rect x="883.7" y="349.3" width="162" height="37.7" fill="#f4f5f4"/>
<rect x="883.7" y="387" width="162" height="1" fill="#e2e2e2"/>
<text x="889" y="361" font-family="Liberation Sans" font-size="6.4" fill="#8a8a8a">Tinkercad</text>
<text x="889" y="376.4" font-family="Liberation Sans" font-size="9.7" fill="#5c5c5c">Basic Shapes</text>
<path d="M1029 366 H1035.5 L1032.2 370 Z" fill="#222"/>
<rect x="1042.5" y="394" width="3" height="61" rx="1.5" fill="#cfcfcf"/>
<!-- shapes -->
<path d="M904.2 422 L918 406.7 L949.3 411.3 L946.2 440 L939 457.9 L906.3 451.2 Z" fill="url(#hatchL)"/>
<path d="M904.2 422 L918 406.7 L949.3 411.3 L940.6 427.2 Z" fill="#fff" opacity="0.25"/>
<path d="M940.6 427.2 L949.3 411.3 L946.2 440 L939 457.9 Z" fill="#000" opacity="0.06"/>
<path d="M904.2 422 L918 406.7 L949.3 411.3 L946.2 440 L939 457.9 L906.3 451.2 Z M904.2 422 L940.6 427.2 L949.3 411.3 M940.6 427.2 L939 457.9" fill="none" stroke="#8a8c90" stroke-width="0.8"/>
<path d="M984.2 417 V447.5 A17.9 7.8 0 0 0 1020 447.5 V417 Z" fill="url(#hatchL)"/>
<ellipse cx="1002.1" cy="417" rx="17.9" ry="8" fill="url(#hatchL)"/>
<ellipse cx="1002.1" cy="417" rx="17.9" ry="8" fill="#fff" opacity="0.25"/>
<path d="M984.2 417 V447.5 A17.9 7.8 0 0 0 1020 447.5 V417 A17.9 8 0 0 0 984.2 417 A17.9 8 0 0 0 1020 417" fill="none" stroke="#8a8c90" stroke-width="0.8"/>
<path d="M904 508.6 L917.5 493.6 L949.8 498.3 L946 528 L939 545.1 L905.7 537.6 Z" fill="#c80f2d"/>
<path d="M904 508.6 L917.5 493.6 L949.8 498.3 L941.2 511.8 Z" fill="#d8142f"/>
<path d="M941.2 511.8 L949.8 498.3 L946 528 L939 545.1 Z" fill="#a9081f"/>
<path d="M984.5 502.2 V534.4 A17.9 7.6 0 0 0 1020.3 534.4 V502.2 Z" fill="#d4701a"/>
<path d="M1005 509.8 Q1020.3 507 1020.3 502.2 V534.4 Q1020.3 540 1005 542" fill="#b85e10" opacity="0.55"/>
<ellipse cx="1002.4" cy="502.2" rx="17.9" ry="7.8" fill="#e07f25"/>
<g font-family="Liberation Sans" font-size="7.8" fill="#888" text-anchor="middle"><text x="927" y="469.8">Box</text><text x="1001" y="469.8">Cylinder</text><text x="927" y="556.5">Box</text><text x="1001" y="556.5">Cylinder</text><text x="927" y="643">Sphere</text><text x="1001" y="643">Scribble</text></g>
<circle cx="928.3" cy="605.2" r="17.2" fill="#1590b8"/>
<circle cx="923" cy="599" r="8" fill="#22a0c2" opacity="0.45"/>
<path d="M986 614 Q984 597 990 593 Q995 591 998 604 Q1000 593 1005 590 Q1011 588 1012 601 Q1013 592 1017 589 Q1021 590 1019 608 Q1017 624 1012 623 Q1008 616 1006 610 Q1003 625 996 625 Q989 625 986 614 Z" fill="#8fb8d0"/>
<path d="M991 598 Q994 606 996 618 M1003 595 Q1006 604 1008 614 M1015 592 Q1016 600 1016 608" stroke="#6f9cb8" stroke-width="1.8" fill="none" opacity="0.7"/>
<!-- edit grid / snap grid (under overlay) -->
<text x="830" y="616.5" font-family="Liberation Sans" font-size="7.2" fill="#9a9a9a">Edit Grid</text>
<text x="790.4" y="637" font-family="Liberation Sans" font-size="7.6" fill="#888">Snap Grid</text>
<rect x="828" y="629" width="0.8" height="11" fill="#d0d0d0"/>
<text x="833" y="637.5" font-family="Liberation Sans" font-size="7.6" fill="#999">1.0 mm</text><circle cx="864.5" cy="635" r="1.1" fill="#777"/>
<!-- overlay gradient -->
<rect x="315" y="470" width="735" height="179" fill="url(#ovl)"/>
<!-- screen recorder toolbar -->
<rect x="315" y="619.3" width="173" height="29" fill="#323232"/><rect x="315" y="648" width="735" height="1" fill="#4a4a4a"/>
<rect x="339" y="619.3" width="30" height="29" fill="#3a3a3a"/>
<g fill="#8a8a8a"><rect x="323.5" y="628.5" width="2.4" height="10"/><rect x="328" y="628.5" width="2.4" height="10"/></g>
<path d="M379 640 L387 631" stroke="#6a6a6a" stroke-width="2.5" stroke-linecap="round"/>
<path d="M408 641 L420 632" stroke="#5f5f5f" stroke-width="4" stroke-linecap="round"/>
<rect x="437" y="630" width="10" height="8" fill="#575757"/>
<path d="M468 629 L476 637 M476 629 L468 637" stroke="#6a6a6a" stroke-width="1.6"/>
<!-- progress bar -->
<rect x="329" y="603.8" width="708.5" height="4" fill="#ffffff" opacity="0.25"/>
<rect x="636.2" y="603.8" width="111.4" height="4" fill="#dcdcdc" opacity="0.85"/>
<rect x="329" y="603.8" width="307.2" height="4" fill="#ff0000"/>
<!-- controls -->
<g fill="#fff">
 <path d="M348 619.3 L363.5 628.5 L348 637.6 Z" fill="#eee"/>
 <path d="M391 623.8 H396 L401.8 618.8 V638.2 L396 633.2 H391 Z" fill="#eee"/>
 <path d="M403.2 623.3 A5.2 5.2 0 0 1 403.2 633.7 Z" fill="#eee"/>
 <path d="M404.2 619.6 A9.4 9.2 0 0 1 404.2 637.6" fill="none" stroke="#eee" stroke-width="2.3"/>
</g>
<text x="428.8" y="632.9" font-family="Liberation Sans" font-size="15" fill="#f4f4f4">2:06 / 4:51</text>
<rect x="881.8" y="619.8" width="21.2" height="16.4" rx="2" fill="#fff"/>
<g fill="none" stroke="#4a4a4a" stroke-width="1.9"><path d="M890.6 625.3 H888.3 Q886.6 625.3 886.6 627 V629.1 Q886.6 630.8 888.3 630.8 H890.6 M898.4 625.3 H896.1 Q894.4 625.3 894.4 627 V629.1 Q894.4 630.8 896.1 630.8 H898.4"/></g>
<g transform="translate(933.3 628)" fill="#f2f2f2">
 <circle r="6.8"/><rect x="-2.3" y="-9.2" width="4.6" height="18.4" rx="0.8"/><rect x="-2.3" y="-9.2" width="4.6" height="18.4" rx="0.8" transform="rotate(60)"/><rect x="-2.3" y="-9.2" width="4.6" height="18.4" rx="0.8" transform="rotate(120)"/>
 <circle r="2.9" fill="#6e6e6e"/>
</g>
<rect x="963.5" y="619.5" width="23.4" height="18.2" fill="none" stroke="#fff" stroke-width="2.2"/>
<rect x="975" y="629" width="9" height="6.3" fill="#fff"/>
<g fill="none" stroke="#fff" stroke-width="2.6"><path d="M1007.5 625 V620 H1012.5 M1021 620 H1026 V625 M1026 632 V637 H1021 M1012.5 637 H1007.5 V632"/></g>


</svg>
</body></html>
